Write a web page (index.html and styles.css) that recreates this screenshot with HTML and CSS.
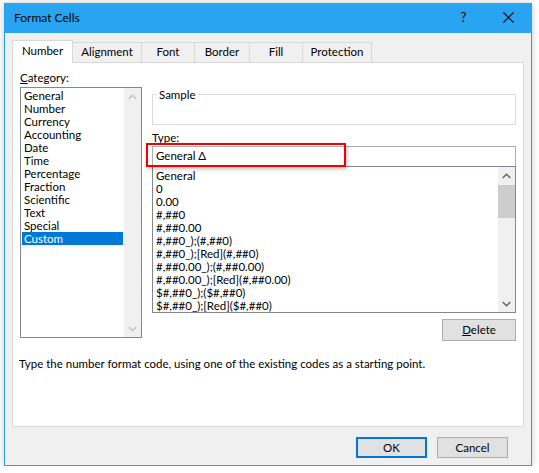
FILE: index.html
```html
<!DOCTYPE html>
<html>
<head>
<meta charset="utf-8">
<link rel="stylesheet" href="styles.css">
</head>
<body>
<div class="window">
  <div class="titlebar">
    <span class="title">Format Cells</span>
    <span class="tb-help">?</span>
    <span class="tb-close">
      <svg width="11" height="11" viewBox="0 0 11 11"><path d="M0.5 0.5 L10.5 10.5 M10.5 0.5 L0.5 10.5" stroke="#000" stroke-width="1.1" fill="none"/></svg>
    </span>
  </div>
  <div class="client">
    <div class="tabs">
      <div class="tab active t-number">Number</div>
      <div class="tab t-align">Alignment</div>
      <div class="tab t-font">Font</div>
      <div class="tab t-border">Border</div>
      <div class="tab t-fill">Fill</div>
      <div class="tab t-prot">Protection</div>
    </div>
    <div class="panel">
      <div class="cols">
        <div class="leftcol">
          <div class="label"><u>C</u>ategory:</div>
          <div class="listbox catlist">
            <div class="items">
              <div class="item">General</div>
              <div class="item">Number</div>
              <div class="item">Currency</div>
              <div class="item">Accounting</div>
              <div class="item">Date</div>
              <div class="item">Time</div>
              <div class="item">Percentage</div>
              <div class="item">Fraction</div>
              <div class="item">Scientific</div>
              <div class="item">Text</div>
              <div class="item">Special</div>
              <div class="item selected">Custom</div>
            </div>
            <div class="vscroll disabled">
              <div class="arrow"><svg width="9" height="6" viewBox="0 0 9 6"><path d="M0.7 5 L4.5 1.2 L8.3 5" stroke="#c2c2c2" stroke-width="1.4" fill="none"/></svg></div>
              <div class="track"></div>
              <div class="arrow"><svg width="9" height="6" viewBox="0 0 9 6"><path d="M0.7 1 L4.5 4.8 L8.3 1" stroke="#c2c2c2" stroke-width="1.4" fill="none"/></svg></div>
            </div>
          </div>
        </div>
        <div class="rightcol">
          <fieldset class="sample">
            <legend>Sample</legend>
          </fieldset>
          <div class="label type-label"><u>T</u>ype:</div>
          <div class="typefield">
            <div class="typeinput">General Δ</div>
            <div class="highlight"></div>
          </div>
          <div class="listbox typelist">
            <div class="items">
              <div class="item">General</div>
              <div class="item">0</div>
              <div class="item">0.00</div>
              <div class="item">#,##0</div>
              <div class="item">#,##0.00</div>
              <div class="item">#,##0_);(#,##0)</div>
              <div class="item">#,##0_);[Red](#,##0)</div>
              <div class="item">#,##0.00_);(#,##0.00)</div>
              <div class="item">#,##0.00_);[Red](#,##0.00)</div>
              <div class="item">$#,##0_);($#,##0)</div>
              <div class="item">$#,##0_);[Red]($#,##0)</div>
            </div>
            <div class="vscroll">
              <div class="arrow"><svg width="9" height="6" viewBox="0 0 9 6"><path d="M0.7 5 L4.5 1.2 L8.3 5" stroke="#606060" stroke-width="1.4" fill="none"/></svg></div>
              <div class="track"><div class="thumb"></div></div>
              <div class="arrow"><svg width="9" height="6" viewBox="0 0 9 6"><path d="M0.7 1 L4.5 4.8 L8.3 1" stroke="#606060" stroke-width="1.4" fill="none"/></svg></div>
            </div>
          </div>
          <div class="btnrow">
            <div class="btn delete"><u>D</u>elete</div>
          </div>
        </div>
      </div>
      <div class="desc">Type the number format code, using one of the existing codes as a starting point.</div>
    </div>
    <div class="footer">
      <div class="btn ok">OK</div>
      <div class="btn cancel">Cancel</div>
    </div>
  </div>
</div>
</body>
</html>
```
FILE: styles.css
```css
* { box-sizing: border-box; }
html, body {
  margin: 0;
  padding: 0;
  background: #ffffff;
}
body {
  font-family: Lato, "Noto Sans", sans-serif;
  font-size: 11.5px;
  color: #000;
  padding: 3px 0 0 4px;
}
.window {
  width: 528px;
  height: 463px;
  border: 1px solid #27a1ed;
  border-top: none;
  background: #f0f0f0;
  box-shadow: 0 0 7px rgba(0, 0, 0, 0.22);
  display: flex;
  flex-direction: column;
}
.titlebar {
  height: 30px;
  background: #29a4f1;
  display: flex;
  align-items: center;
  padding-left: 9px;
  flex: none;
}
.title {
  font-size: 12px;
  flex: 1;
  padding-bottom: 2px;
}
.tb-help {
  width: 46px;
  text-align: center;
  font-size: 13px;
  padding-left: 3px;
  padding-bottom: 2px;
}
.tb-close {
  width: 46px;
  display: flex;
  justify-content: center;
  align-items: center;
  padding-bottom: 1px;
}
.client {
  flex: 1;
  display: flex;
  flex-direction: column;
  padding: 7px 7px 0 7px;
}
.tabs {
  display: flex;
  align-items: flex-end;
  height: 22px;
  position: relative;
  z-index: 2;
}
.tab {
  height: 20px;
  border: 1px solid #d9d9d9;
  border-bottom: none;
  margin-left: -1px;
  text-align: center;
  line-height: 18px;
  background: #f0f0f0;
}
.tab.active {
  height: 23px;
  margin-bottom: -1px;
  margin-left: 0;
  background: #ffffff;
  line-height: 20px;
}
.t-number { width: 61px; }
.t-align { width: 70px; }
.t-font { width: 54px; }
.t-border { width: 56px; }
.t-fill { width: 54px; }
.t-prot { width: 70px; }
.panel {
  height: 365px;
  background: #ffffff;
  border: 1px solid #d9d9d9;
  padding: 7px 7px 0 7px;
  position: relative;
  z-index: 1;
}
.cols {
  display: grid;
  grid-template-columns: 122px 364px;
  column-gap: 10px;
}
.label {
  height: 15px;
  line-height: 15px;
}
.leftcol .label { margin-bottom: 2px; }
.listbox {
  border: 1px solid #828790;
  background: #fff;
  display: flex;
}
.catlist {
  height: 251px;
}
.items {
  flex: 1;
  padding: 1px 1px 0 1px;
}
.item {
  height: 13px;
  line-height: 13px;
  padding-left: 2px;
  white-space: nowrap;
}
.item.selected {
  background: #0078d7;
  color: #fff;
}
.vscroll {
  width: 17px;
  background: #f0f0f0;
  display: flex;
  flex-direction: column;
}
.arrow {
  height: 17px;
  display: flex;
  align-items: center;
  justify-content: center;
}
.track {
  flex: 1;
}
.thumb {
  height: 33px;
  margin: 1px 0 0 0;
  background: #cdcdcd;
}
.sample {
  margin: 18px 0 0 0;
  padding: 0;
  height: 37px;
  border: 1px solid #dcdcdc;
  min-width: 0;
}
.sample legend {
  margin-left: 4px;
  padding: 0 2px;
  line-height: 13px;
}
.type-label {
  margin-top: 5px;
  margin-bottom: 1px;
}
.typefield {
  position: relative;
}
.typeinput {
  height: 20px;
  border: 1px solid #abadb3;
  border-bottom: none;
  line-height: 18px;
  padding-left: 3px;
}
.highlight {
  position: absolute;
  left: -6px;
  top: -3px;
  width: 200px;
  height: 24px;
  border: 2px solid #f00000;
  box-shadow: 1px 2px 4px rgba(0, 0, 0, 0.25);
}
.typelist {
  height: 147px;
}
.typelist .items {
  padding-top: 2px;
}
.btnrow {
  display: flex;
  justify-content: flex-end;
  margin-top: 6px;
}
.btn {
  height: 22px;
  background: #e1e1e1;
  border: 1px solid #adadad;
  text-align: center;
  line-height: 20px;
}
.delete { width: 74px; }
.desc {
  margin-top: 15px;
  line-height: 15px;
  margin-left: -1px;
}
.footer {
  display: flex;
  justify-content: flex-end;
  gap: 10px;
  padding: 10px 16px 0 0;
}
.ok {
  width: 71px;
  height: 21px;
  border: 2px solid #0078d7;
  line-height: 17px;
}
.cancel {
  width: 71px;
  height: 21px;
  line-height: 19px;
}
```
